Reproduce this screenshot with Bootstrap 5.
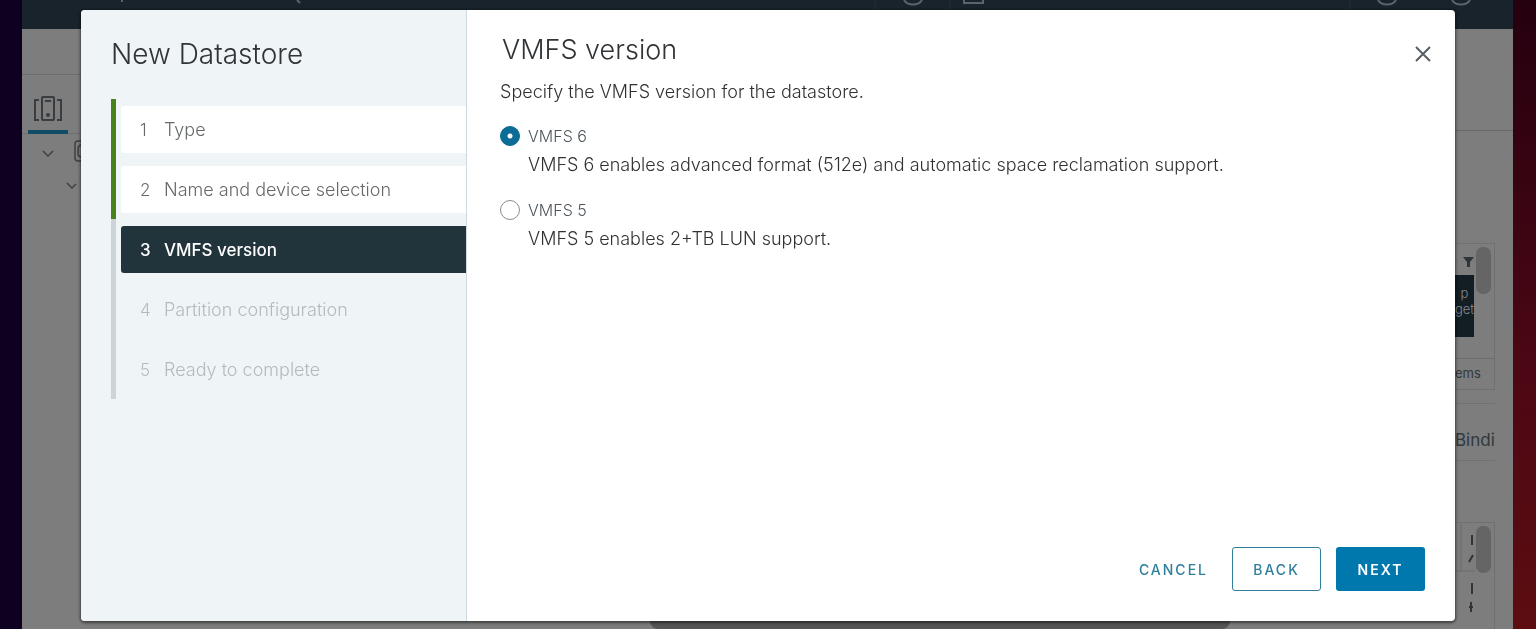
<!DOCTYPE html>
<html lang="en">
<head>
<meta charset="utf-8">
<meta name="viewport" content="width=device-width, initial-scale=1">
<title>New Datastore</title>
<link href="https://cdn.jsdelivr.net/npm/bootstrap@5.3.0/dist/css/bootstrap.min.css" rel="stylesheet">
<style>
  body { font-family: Inter, "Open Sans", sans-serif; font-size: 18px; line-height: 24px; color: #424446; overflow: hidden; }
  .desk { height: 100vh; padding: 0 23px 0 22px; overflow: hidden;
    background: linear-gradient(to bottom, #25000f, #4d0714 60%, #5c0d10) right / 24px 100% no-repeat, #0e0020; }
  .client { background: #7d7d7d; }
  .topbar { height: 29px; background: #18232b; color: #5c6469; padding: 0 42px; }
  .topbar svg { display: block; }
  .panes { min-height: 0; overflow: hidden; }
  .tree-pane { width: 59px; }
  .crumb { height: 46px; border-bottom: 1px solid #6c6c6c; }
  .tab-strip { height: 59px; border-bottom: 1px solid #707070; padding: 0 6px; }
  .tab-on { width: 40px; height: 59px; border-bottom: 4px solid #104c66; padding-top: 21px; color: #3a3d3f; }
  .tree-row { height: 32px; color: #404040; }
  .detail-pane { width: 58px; color: #30393e; }
  .detail-head { height: 102px; border-bottom: 1px solid #696969; }
  .detail-body { width: 40px; }
  .list-box { border: 1px solid #707070; border-left: 0; margin-top: 112px; }
  .bound-box { margin-top: 61px; height: 120px; }
  .picked { width: 19px; height: 62px; background: #121d24; color: #858b8e; padding-top: 10px; font-size: 13px; line-height: 16px; font-weight: 300; text-align: center; }
  .picked span { display: block; }
  .thumb { width: 15px; height: 47px; border-radius: 7px; background: #656565; margin: 3px 3px 0 0; }
  .box-foot { height: 31px; border-top: 1px solid #6c6c6c; font-size: 13px; line-height: 29px; margin-top: 21px; }
  .tabs-line { height: 58px; margin-top: 13px; border-top: 1px solid #707070; border-bottom: 1px solid #707070; line-height: 72px; font-size: 17px; }
  .hscroll { width: 580px; height: 8px; margin: -8px 19% 0 0; border-radius: 0 0 8px 8px; background: #545454; }

  .veil { position: fixed; inset: 0; padding: 10px 81px 8px; }
  .wizard { background: #fff; border-radius: 4px; box-shadow: 0 1px 3px 1px #00000080; overflow: hidden; }
  .wizard-side { width: 28.1%; background: #eff4f7; border-right: 1px solid #cfd8dc; padding: 28px 0 0 30px; }
  .wizard-side h1, .wizard-main h2 { font-size: 28px; line-height: 32px; font-weight: 300; margin: 0; color: #313437; }
  .wizard-main h2 { font-size: 27px; padding-left: 2px; }
  .steps { margin: 29px 0 0; padding: 0; list-style: none; }
  .steps li { border-left: 5px solid #ccd4d8; padding: 7px 0 6px 5px; }
  .steps li.done { border-color: #48821c; }
  .steps button { height: 47px; width: 100%; border: 0; border-radius: 3px 0 0 3px; background: none; text-align: left; padding: 0 19px; color: #66696b; font-weight: 300; }
  .steps button span:first-child { width: 24px; font-size: 17px; }
  .steps .done button { background: #fff; }
  .steps .now button { background: #21333b; color: #fff; font-weight: 500; font-size: 17px; }
  .steps button:disabled { color: #b4babd; }
  .wizard-main { padding: 24px 30px 30px 33px; font-weight: 300; color: #2f3133; }
  .close-x { border: 0; background: none; padding: 0; width: 24px; height: 24px; color: #565f64; margin: 8px -10px 0 0; }
  .lead-line { margin: 14px 0 20px; }
  .choice { display: grid; grid-template-columns: 20px 1fr; column-gap: 8px; align-items: center; margin-bottom: 21px; }
  .choice .form-check-input { width: 20px; height: 20px; margin: 0; border-color: #8c8c8c; }
  .choice .form-check-input:checked { background-color: #0b6c95; border-color: #0b6c95;
    background-image: radial-gradient(circle, #fff 0 2px, transparent 3px); }
  .choice label { font-size: 16px; color: #4c555a; }
  .choice p { grid-column: 2; margin: 5px 0 0; }
  .wizard .btn { height: 44px; min-width: 89px; border-radius: 3px; font-size: 14px; font-weight: 500; letter-spacing: 2px; text-transform: uppercase; padding: 0 19px; }
  .btn-plain { color: #2f7f9b; }
  .btn-line { color: #2f7f9b; border: 1px solid #2f7f9b; margin-right: 15px; }
  .wizard .btn-fill { background: #0078ad; color: #fff; font-weight: 600; }
</style>
</head>
<body>
<div class="desk">
  <div class="client h-100 d-flex flex-column">
    <header class="topbar d-flex align-items-start justify-content-end flex-shrink-0">
      <div class="d-flex flex-grow-1">
        <svg width="240" height="8" fill="none" stroke="currentColor" stroke-width="2"><path d="M58 0v2M233 0l3 3"/></svg>
      </div>
      <svg width="600" height="10" fill="none" stroke="currentColor" stroke-width="2"><path d="M4 0v10M79 0v10M479 0v10" stroke="#252e36" stroke-width="1"/><path d="M33 0a10 8 0 0 0 18 0M93 0v3h19V0M507 0a10 8 0 0 0 18 0M581 0a10 8 0 0 0 18 0"/></svg>
    </header>
    <div class="panes d-flex flex-grow-1 justify-content-between">
      <nav class="tree-pane" aria-label="Inventory">
        <div class="crumb"></div>
        <div class="tab-strip">
          <div class="tab-on">
            <svg class="d-block mx-auto" width="28" height="26" fill="none" stroke="currentColor" stroke-width="2"><rect x="8" y="1" width="12" height="23" rx="1"/><path d="M11 5h6M5 4H1v20h4M23 4h4v20h-4"/><circle cx="14" cy="19" r="1"/></svg>
          </div>
        </div>
        <div class="tree-row d-flex align-items-end justify-content-between ps-3 ms-1">
          <svg class="mb-2" width="12" height="8" fill="none" stroke="currentColor" stroke-width="1.5"><path d="M1 1l5 5 5-5"/></svg>
          <svg class="mb-1" width="7" height="22" fill="none" stroke="currentColor" stroke-width="1.5"><path d="M8 1H4q-3 0-3 3v14q0 3 3 3h4M8 5q-4 0-4 4v5q0 3 4 3"/></svg>
        </div>
        <div class="tree-row d-flex align-items-end justify-content-end">
          <svg class="mb-2 me-1" width="11" height="8" fill="none" stroke="currentColor" stroke-width="1.5"><path d="M1 1l5 5 4-4"/></svg>
        </div>
      </nav>
      <section class="detail-pane">
        <div class="detail-head"></div>
        <div class="detail-body">
          <div class="list-box">
            <div class="d-flex justify-content-between">
              <div>
                <svg class="d-block ms-auto" width="11" height="31" fill="#303436"><path d="M0 13h11L7 18v5H4v-5z"/></svg>
                <div class="picked"><span>p</span><span>get</span></div>
              </div>
              <div class="thumb"></div>
            </div>
            <div class="box-foot">ems</div>
          </div>
          <div class="tabs-line">Bindi</div>
          <div class="list-box bound-box">
            <div class="d-flex justify-content-between">
              <svg width="20" height="100" fill="none" stroke="#333"><path d="M6 0v48M0 48h20" stroke="#6c6c6c"/><path d="M17 12v10M14 39l4-7M17 60v11M14 84h4M16 79v10" stroke-width="2"/></svg>
              <div class="thumb"></div>
            </div>
          </div>
        </div>
      </section>
    </div>
    <div class="hscroll align-self-end flex-shrink-0"></div>
  </div>
</div>

<div class="veil">
  <div class="wizard d-flex h-100" role="dialog" aria-modal="true" aria-labelledby="wizard-title">
    <aside class="wizard-side flex-shrink-0">
      <h1 id="wizard-title">New Datastore</h1>
      <ol class="steps">
        <li class="done"><button type="button" class="d-flex align-items-center"><span>1</span><span>Type</span></button></li>
        <li class="done"><button type="button" class="d-flex align-items-center"><span>2</span><span>Name and device selection</span></button></li>
        <li class="now"><button type="button" class="d-flex align-items-center" aria-current="step"><span>3</span><span>VMFS version</span></button></li>
        <li><button type="button" class="d-flex align-items-center" disabled><span>4</span><span>Partition configuration</span></button></li>
        <li><button type="button" class="d-flex align-items-center" disabled><span>5</span><span>Ready to complete</span></button></li>
      </ol>
    </aside>
    <main class="wizard-main d-flex flex-column flex-grow-1">
      <div class="d-flex justify-content-between">
        <h2>VMFS version</h2>
        <button type="button" class="close-x" aria-label="Close"><svg class="d-block mx-auto" width="16" height="16" fill="none" stroke="currentColor" stroke-width="2"><path d="M1 1l14 14M15 1L1 15"/></svg></button>
      </div>
      <p class="lead-line">Specify the VMFS version for the datastore.</p>
      <div>
        <div class="choice">
          <input class="form-check-input" type="radio" name="vmfs" id="vmfs6" checked>
          <label for="vmfs6">VMFS 6</label>
          <p>VMFS 6 enables advanced format (512e) and automatic space reclamation support.</p>
        </div>
        <div class="choice">
          <input class="form-check-input" type="radio" name="vmfs" id="vmfs5">
          <label for="vmfs5">VMFS 5</label>
          <p>VMFS 5 enables 2+TB LUN support.</p>
        </div>
      </div>
      <div class="d-flex justify-content-end mt-auto">
        <button type="button" class="btn btn-plain me-1">Cancel</button>
        <button type="button" class="btn btn-line">Back</button>
        <button type="button" class="btn btn-fill">Next</button>
      </div>
    </main>
  </div>
</div>
<script src="https://cdn.jsdelivr.net/npm/bootstrap@5.3.0/dist/js/bootstrap.bundle.min.js"></script>
</body>
</html>
